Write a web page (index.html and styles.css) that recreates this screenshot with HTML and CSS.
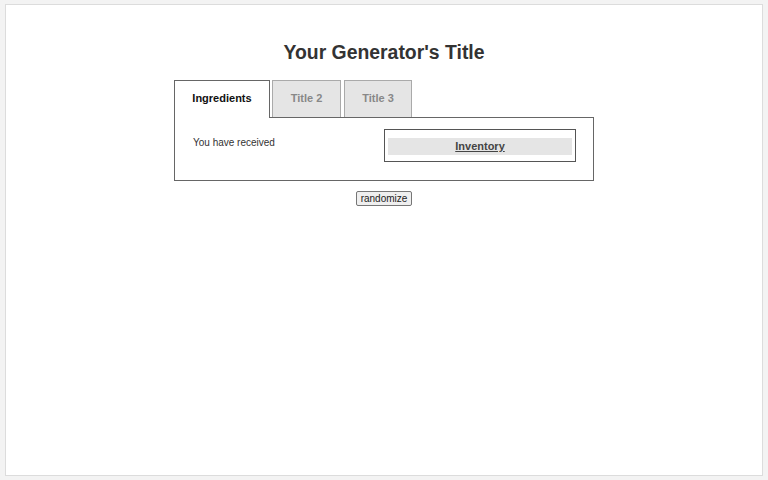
FILE: index.html
```html
<!DOCTYPE html>
<html>
  <head>
    <meta http-equiv="Content-Type" content="text/html;charset=UTF-8" />
    <title>Your Generator's Title</title>
    <link rel="stylesheet" href="styles.css">
  </head>
  <body>
    <div class="page">
      <h1 class="title">Your Generator's Title</h1>
      <div class="tabs">
        <div class="tab _active">Ingredients</div>
        <div class="tab">Title 2</div>
        <div class="tab">Title 3</div>
      </div>
      <div class="panel">
        <div class="received">You have received</div>
        <div class="inventory">
          <div class="inventory_head">Inventory</div>
        </div>
      </div>
      <button class="randomize">randomize</button>
    </div>
  </body>
</html>
```

FILE: styles.css
```css
html {
  font-family: "Liberation Sans", Arial, Helvetica, sans-serif;
}
body {
  margin: 0;
  padding: 4px 5px 4px 5px;
  height: 480px;
  box-sizing: border-box;
  background-color: #f3f3f3;
}
.page {
  height: 100%;
  box-sizing: border-box;
  background: #fff;
  border: 1px solid #dcdcdc;
  display: flex;
  flex-direction: column;
  align-items: center;
  color: #333;
}
.title {
  margin: 36px 0 17px;
  font-size: 19.4px;
  line-height: 22px;
  font-weight: bold;
  color: #333;
}
.tabs {
  display: flex;
  width: 420px;
  gap: 2px;
}
.tab {
  height: 37px;
  line-height: 35px;
  box-sizing: border-box;
  text-align: center;
  font-size: 11px;
  font-weight: bold;
  color: #888;
  background: #e5e5e5;
  border: 1px solid #aaa;
  border-bottom: none;
}
.tab:nth-child(1) {
  width: 96px;
}
.tab:nth-child(2) {
  width: 69px;
}
.tab:nth-child(3) {
  width: 68px;
  margin-left: 1px;
}
.tab._active {
  color: #111;
  background: #fff;
  border-color: #666;
  position: relative;
  z-index: 1;
  height: 38px;
  margin-bottom: -1px;
}
.panel {
  width: 420px;
  height: 64px;
  box-sizing: border-box;
  border: 1px solid #666;
  display: flex;
  justify-content: space-between;
  align-items: flex-start;
  padding: 11px 17px 0 18px;
}
.received {
  font-size: 10px;
  margin-top: 8px;
  color: #333;
}
.inventory {
  width: 192px;
  height: 33px;
  box-sizing: border-box;
  border: 1px solid #555;
  padding: 8px 3px 0;
}
.inventory_head {
  background: #e5e5e5;
  height: 17px;
  line-height: 17px;
  text-align: center;
  font-size: 11px;
  font-weight: bold;
  text-decoration: underline;
  color: #444;
}
.randomize {
  margin-top: 10px;
  font-family: "Liberation Sans", Arial, sans-serif;
  font-size: 10px;
  padding: 1px 3.5px;
  height: 15px;
  line-height: 11px;
  background: #efefef;
  border: 1px solid #767676;
  border-radius: 2px;
  color: #222;
}
```
